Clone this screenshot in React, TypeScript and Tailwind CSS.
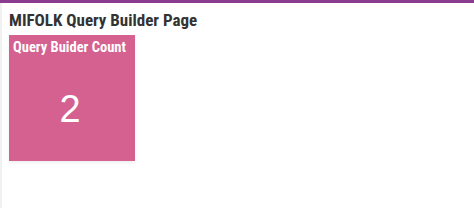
import React from 'react';

const CountCard: React.FC<{ label: string; value: number }> = ({ label, value }) => (
  <div className="w-[126px] h-[126px] bg-[#d4618f] flex flex-col shadow-[0_2px_3px_rgba(0,0,0,0.06)]">
    <div className="pt-[4px] pl-[4px] text-[14.5px] leading-[18px] font-bold text-white whitespace-nowrap font-['Roboto',sans-serif] font-stretch-condensed">
      {label}
    </div>
    <div className="flex-1 flex items-center justify-center pr-[4px]">
      <span className="text-[38px] leading-[38px] text-white font-['Liberation_Sans',Arial,sans-serif]">{value}</span>
    </div>
  </div>
);

export default function App() {
  return (
    <div className="w-[474px] h-[208px] bg-white overflow-hidden flex flex-col">
      <div className="h-[3px] bg-[#8b3c8f] shrink-0"></div>
      <div className="flex-1 border-l-2 border-[#f1f1f1] pl-[7px] pt-[7px]">
        <h1 className="text-[17px] leading-[20px] font-bold text-[#333333] font-['Roboto',sans-serif] font-stretch-condensed">
          MIFOLK Query Builder Page
        </h1>
        <div className="mt-[5px]">
          <CountCard label="Query Buider Count" value={2} />
        </div>
      </div>
    </div>
  );
}
